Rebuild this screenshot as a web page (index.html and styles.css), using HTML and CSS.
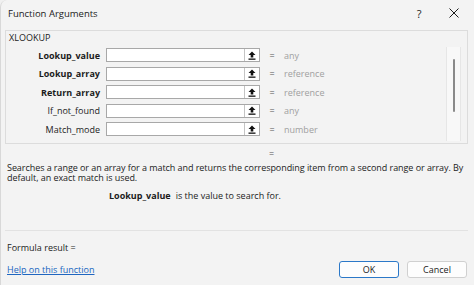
FILE: index.html
```html
<!DOCTYPE html>
<html>
<head>
    <title>Function Arguments</title>
    <link rel="stylesheet" href="styles.css">
</head>
<body>
    <div class="dialog">
        <!-- Title bar -->
        <div class="titlebar">
            <span class="title">Function Arguments</span>
            <span class="help">?</span>
            <span class="close">
                <svg width="10" height="10" viewBox="0 0 10 10"><path d="M0.5 0.5 L9.5 9.5 M9.5 0.5 L0.5 9.5" stroke="#1b1b1b" stroke-width="1"/></svg>
            </span>
        </div>

        <!-- Argument group -->
        <div class="group">
            <div class="group-main">
                <div class="legend">XLOOKUP</div>
                <div class="args">
                    <label class="required">Lookup_value</label>
                    <div class="ref-input"><span class="field"></span><span class="pick"><svg width="8" height="9" viewBox="0 0 8 9"><path d="M4 0.5 L7.5 4 H5.3 V6.5 H2.7 V4 H0.5 Z" fill="#111"/><rect x="0.5" y="7.5" width="7" height="1.3" fill="#111"/></svg></span></div>
                    <span class="eq">=</span>
                    <span class="val">any</span>

                    <label class="required">Lookup_array</label>
                    <div class="ref-input"><span class="field"></span><span class="pick"><svg width="8" height="9" viewBox="0 0 8 9"><path d="M4 0.5 L7.5 4 H5.3 V6.5 H2.7 V4 H0.5 Z" fill="#111"/><rect x="0.5" y="7.5" width="7" height="1.3" fill="#111"/></svg></span></div>
                    <span class="eq">=</span>
                    <span class="val">reference</span>

                    <label class="required">Return_array</label>
                    <div class="ref-input"><span class="field"></span><span class="pick"><svg width="8" height="9" viewBox="0 0 8 9"><path d="M4 0.5 L7.5 4 H5.3 V6.5 H2.7 V4 H0.5 Z" fill="#111"/><rect x="0.5" y="7.5" width="7" height="1.3" fill="#111"/></svg></span></div>
                    <span class="eq">=</span>
                    <span class="val">reference</span>

                    <label>If_not_found</label>
                    <div class="ref-input"><span class="field"></span><span class="pick"><svg width="8" height="9" viewBox="0 0 8 9"><path d="M4 0.5 L7.5 4 H5.3 V6.5 H2.7 V4 H0.5 Z" fill="#111"/><rect x="0.5" y="7.5" width="7" height="1.3" fill="#111"/></svg></span></div>
                    <span class="eq">=</span>
                    <span class="val">any</span>

                    <label>Match_mode</label>
                    <div class="ref-input"><span class="field"></span><span class="pick"><svg width="8" height="9" viewBox="0 0 8 9"><path d="M4 0.5 L7.5 4 H5.3 V6.5 H2.7 V4 H0.5 Z" fill="#111"/><rect x="0.5" y="7.5" width="7" height="1.3" fill="#111"/></svg></span></div>
                    <span class="eq">=</span>
                    <span class="val">number</span>
                </div>
            </div>
            <!-- Scrollbar -->
            <div class="scroll"><div class="thumb"></div></div>
        </div>

        <!-- Description -->
        <div class="info">
            <div class="result-eq">=</div>
            <p class="desc">Searches a range or an array for a match and returns the corresponding item from a second range or array. By default, an exact match is used.</p>
            <div class="arg-help">
                <span class="arg-name">Lookup_value</span>
                <span class="arg-text">is the value to search for.</span>
            </div>
        </div>

        <div class="formula">Formula result =</div>

        <!-- Footer -->
        <div class="footer">
            <a href="#" class="help-link">Help on this function</a>
            <button class="btn btn-default">OK</button>
            <button class="btn">Cancel</button>
        </div>
    </div>
</body>
</html>
```

FILE: styles.css
```css
/* Dialog look, Windows 11 style */
body {
    margin: 0;
    background-color: #f0f0f0;
    font-family: "Open Sans", "Noto Sans", sans-serif;
    font-size: 9px;
    color: #1b1b1b;
}

.dialog {
    width: 474px;
    height: 285px;
    box-sizing: border-box;
    display: flex;
    flex-direction: column;
    background-color: #f3f3f3;
    border-left: 1px solid #d8d8d8;
    border-top-left-radius: 7px;
    overflow: hidden;
}

.titlebar {
    height: 26px;
    display: flex;
    align-items: center;
    padding-left: 7px;
    font-size: 9.5px;
}
.title {
    flex: 1;
}
.help {
    width: 30px;
    text-align: center;
    font-size: 11px;
}
.close {
    width: 40px;
    display: flex;
    justify-content: center;
}

.group {
    height: 112px;
    margin: 4px 6px 0 4px;
    border: 1px solid #dcdcdc;
    display: flex;
}
.group-main {
    flex: 1;
}
.legend {
    height: 17px;
    line-height: 13px;
    padding-left: 3px;
}

.args {
    display: grid;
    grid-template-columns: 94px 154px 12px 1fr;
    grid-auto-rows: 14px;
    row-gap: 4.5px;
    column-gap: 6px;
    align-items: center;
}
.args label {
    text-align: right;
}
.args label.required {
    font-weight: bold;
}

.ref-input {
    height: 14px;
    box-sizing: border-box;
    display: flex;
    border: 1px solid #a8a8a8;
    background-color: #fff;
}
.field {
    flex: 1;
}
.pick {
    width: 14px;
    display: flex;
    align-items: center;
    justify-content: center;
    border-left: 1px solid #c4c4c4;
}

.eq {
    text-align: center;
    color: #555;
}
.val {
    color: #a0a0a0;
}

.scroll {
    width: 13px;
    margin: 16px 6px 2px 0;
    background-color: #f8f8f8;
    border-left: 1px solid #e6e6e6;
    border-right: 1px solid #e6e6e6;
    display: flex;
    justify-content: center;
}
.thumb {
    width: 2px;
    height: 53px;
    margin-top: 12px;
    background-color: #8a8a8a;
    border-radius: 1px;
}

.info {
    height: 86px;
    margin: 0 6px 0 4px;
    border-bottom: 1px solid #e2e2e2;
}
.result-eq {
    height: 13px;
    line-height: 13px;
    padding: 3px 0 0 264px;
    color: #555;
}
.desc {
    margin: 3px 0 0 2px;
    line-height: 10px;
    letter-spacing: -0.06px;
}
.arg-help {
    margin-top: 6px;
    padding-left: 104px;
    display: flex;
    gap: 5px;
}
.arg-name {
    font-weight: bold;
}

.formula {
    height: 18px;
    line-height: 18px;
    padding: 8px 0 0 6px;
}

.footer {
    display: flex;
    align-items: center;
    padding: 4px 7px 0 6px;
}
.help-link {
    flex: 1;
    color: #2066c0;
    text-decoration: underline;
}
.btn {
    width: 60px;
    height: 17px;
    margin-left: 8px;
    padding: 0;
    font-family: inherit;
    font-size: 9px;
    color: #1b1b1b;
    background-color: #fdfdfd;
    border: 1px solid #d0d0d0;
    border-radius: 3px;
}
.btn-default {
    border-color: #2b78c8;
}
```
